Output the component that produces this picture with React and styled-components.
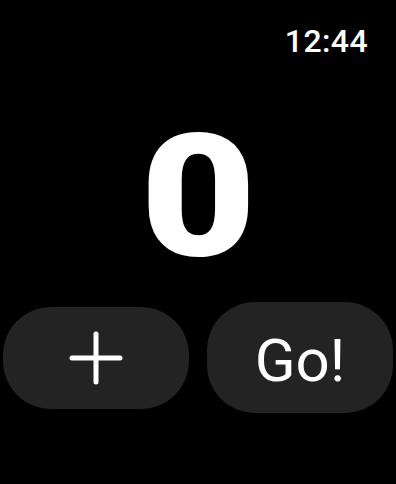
import styled, { createGlobalStyle } from "styled-components";

const GlobalStyle = createGlobalStyle`
  html, body {
    margin: 0;
    padding: 0;
    background: #000;
  }
  body {
    font-family: Roboto, "Liberation Sans", sans-serif;
    color: #fff;
  }
`;

const Screen = styled.div`
  width: 396px;
  height: 484px;
  box-sizing: border-box;
  padding: 26px 3px 0 3px;
  display: flex;
  flex-direction: column;
  overflow: hidden;
  background: #000;
`;

const StatusBar = styled.div`
  display: flex;
  justify-content: flex-end;
  padding-right: 25px;
`;

const Clock = styled.span`
  font-size: 32px;
  line-height: 31px;
  font-weight: 500;
  letter-spacing: 0.4px;
`;

const Counter = styled.div`
  margin-top: 55px;
  height: 170px;
  display: flex;
  justify-content: center;
`;

const CounterValue = styled.span`
  display: inline-block;
  font-size: 170px;
  line-height: 170px;
  font-weight: 900;
  transform: scaleX(1.18);
`;

const Controls = styled.div`
  margin-top: 20px;
  display: flex;
  align-items: center;
  gap: 18px;
`;

const Button = styled.button`
  flex: 1;
  height: ${({ $height }) => $height}px;
  border: none;
  border-radius: 48px;
  background: #232323;
  color: #fff;
  display: flex;
  align-items: center;
  justify-content: center;
  padding: 0;
  font-family: Roboto, "Liberation Sans", sans-serif;
  font-size: 60px;
  line-height: 60px;
  font-weight: 400;
`;

const Label = styled.span`
  padding-top: 6px;
`;

function PlusIcon() {
  return (
    <svg width="56" height="56" viewBox="0 0 56 56">
      <path
        d="M28 4v48M4 28h48"
        stroke="#fff"
        strokeWidth="5"
        strokeLinecap="round"
        fill="none"
      />
    </svg>
  );
}

export default function App() {
  return (
    <>
      <GlobalStyle />
      <Screen>
        <StatusBar>
          <Clock>12:44</Clock>
        </StatusBar>
        <Counter>
          <CounterValue>0</CounterValue>
        </Counter>
        <Controls>
          <Button $height={102} aria-label="Add">
            <PlusIcon />
          </Button>
          <Button $height={111}>
            <Label>Go!</Label>
          </Button>
        </Controls>
      </Screen>
    </>
  );
}
